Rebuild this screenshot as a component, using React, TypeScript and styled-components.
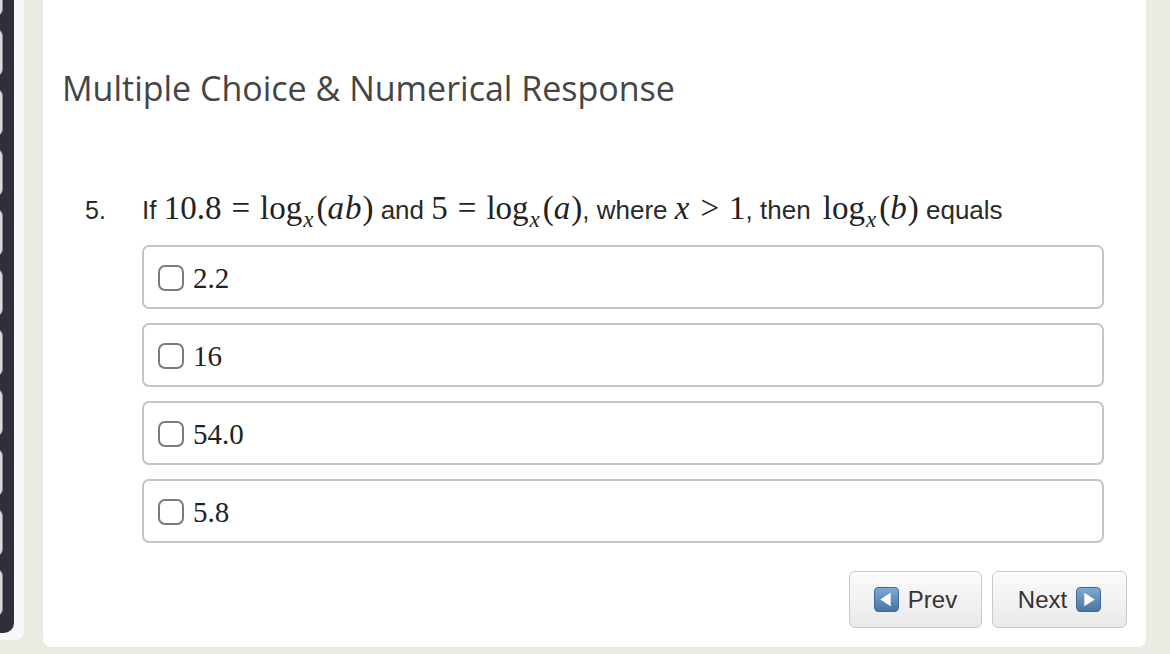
import React from "react";
import styled, { createGlobalStyle } from "styled-components";

const GlobalStyle = createGlobalStyle`
  html, body {
    margin: 0;
    padding: 0;
    background: #ebebe4;
    overflow: hidden;
  }
`;

const Page = styled.div`
  display: flex;
  align-items: flex-start;
  height: 654px;
  width: 1170px;
`;

const SideStrip = styled.div`
  width: 24px;
  height: 640px;
  background: #f8f8f6;
  border-bottom-right-radius: 8px;
  flex-shrink: 0;
`;

const SideDark = styled.div`
  width: 14px;
  margin-top: -32px;
  height: 665px;
  background: #2e2f39;
  border-bottom-right-radius: 10px;
  overflow: hidden;
  display: flex;
  flex-direction: column;
  gap: 11px;
`;

const SideItem = styled.div`
  flex-shrink: 0;
  width: 40px;
  height: 49px;
  margin-left: -37px;
  border: 1px solid #8e8f96;
  border-radius: 8px;
  background: #d9d9dc;
  box-sizing: border-box;
`;

const Card = styled.main`
  flex: 1;
  margin-left: 19px;
  margin-right: 24px;
  height: 647px;
  background: #ffffff;
  border-bottom-left-radius: 8px;
  border-bottom-right-radius: 8px;
  box-sizing: border-box;
  padding: 0 42px 0 19px;
  display: flex;
  flex-direction: column;
`;

const Title = styled.h1`
  margin: 65px 0 0 0;
  font-family: "Open Sans", sans-serif;
  font-weight: 400;
  font-size: 34px;
  line-height: 46px;
  color: #454545;
`;

const Question = styled.div`
  margin-top: 80px;
  display: flex;
  align-items: baseline;
  font-family: "Liberation Sans", Arial, sans-serif;
  font-size: 26px;
  color: #2a2a2a;
  line-height: 34px;
`;

const Num = styled.span`
  width: 57px;
  padding-left: 23px;
  flex-shrink: 0;
  font-size: 25px;
`;

const Prompt = styled.span`
  white-space: nowrap;
`;

const M = styled.span<{ $gap?: boolean }>`
  font-family: "Liberation Serif", "Times New Roman", serif;
  font-size: 33px;
  color: #222;
  margin-left: ${(p) => (p.$gap ? "5px" : "0")};
`;

const Op = styled.span`
  margin: 0 10px;
`;

const V = styled.i`
  font-family: "Liberation Serif", "Times New Roman", serif;
  font-style: italic;
  letter-spacing: 1px;
`;

const Sub = styled.sub`
  font-family: "Liberation Serif", "Times New Roman", serif;
  font-style: italic;
  font-size: 23px;
  vertical-align: -8px;
  line-height: 0;
  margin: 0 3px 0 1px;
`;

const Options = styled.div`
  margin: 18px 0 0 80px;
  display: flex;
  flex-direction: column;
  gap: 14px;
`;

const Option = styled.label`
  display: flex;
  align-items: center;
  gap: 9px;
  height: 64px;
  box-sizing: border-box;
  border: 2px solid #c4c4c4;
  border-radius: 7px;
  padding-left: 14px;
  padding-top: 2px;
  cursor: pointer;
`;

const Box = styled.span`
  width: 26px;
  height: 26px;
  box-sizing: border-box;
  border: 2px solid #7b7b7b;
  border-radius: 7px;
  flex-shrink: 0;
`;

const OptText = styled.span`
  font-family: "Liberation Serif", "Times New Roman", serif;
  font-size: 29px;
  color: #222;
`;

const Nav = styled.div`
  margin: 28px -23px 0 0;
  display: flex;
  justify-content: flex-end;
  gap: 10px;
`;

const NavButton = styled.button<{ $w: number }>`
  display: flex;
  align-items: center;
  justify-content: center;
  gap: 9px;
  height: 57px;
  width: ${(p) => p.$w}px;
  box-sizing: border-box;
  border: 1px solid #c9c9c9;
  border-radius: 6px;
  background: linear-gradient(#fbfbfb, #e9e9e9);
  box-shadow: inset 0 1px 0 #ffffff;
  font-family: "Liberation Sans", Arial, sans-serif;
  font-size: 24px;
  color: #333;
  padding: 0;
`;

function ArrowIcon({ dir }: { dir: "left" | "right" }) {
  const id = `g-${dir}`;
  return (
    <svg width="25" height="25" viewBox="0 0 24 24">
      <defs>
        <linearGradient id={id} x1="0" y1="0" x2="0" y2="1">
          <stop offset="0" stopColor="#7faad6" />
          <stop offset="1" stopColor="#46759f" />
        </linearGradient>
      </defs>
      <rect x="0.5" y="0.5" width="23" height="23" rx="4" fill={`url(#${id})`} stroke="#3f6a94" />
      {dir === "left" ? (
        <path d="M6 12 L16 5.5 L16 18.5 Z" fill="#ffffff" />
      ) : (
        <path d="M18 12 L8 5.5 L8 18.5 Z" fill="#ffffff" />
      )}
    </svg>
  );
}

const answers = ["2.2", "16", "54.0", "5.8"];

export default function App() {
  return (
    <>
      <GlobalStyle />
      <Page>
        <SideStrip>
          <SideDark>
            {Array.from({ length: 11 }).map((_, i) => (
              <SideItem key={i} />
            ))}
          </SideDark>
        </SideStrip>
        <Card>
          <Title>Multiple Choice &amp; Numerical Response</Title>
          <Question>
            <Num>5.</Num>
            <Prompt>
              If <M>10.8<Op>=</Op>log<Sub>x</Sub>(<V>ab</V>)</M> and <M>5<Op>=</Op>log<Sub>x</Sub>(<V>a</V>)</M>, where{" "}
              <M><V>x</V><Op>&gt;</Op>1</M>, then <M $gap>log<Sub>x</Sub>(<V>b</V>)</M> equals
            </Prompt>
          </Question>
          <Options>
            {answers.map((a) => (
              <Option key={a}>
                <Box />
                <OptText>{a}</OptText>
              </Option>
            ))}
          </Options>
          <Nav>
            <NavButton $w={133}>
              <ArrowIcon dir="left" />
              Prev
            </NavButton>
            <NavButton $w={135}>
              Next
              <ArrowIcon dir="right" />
            </NavButton>
          </Nav>
        </Card>
      </Page>
    </>
  );
}
